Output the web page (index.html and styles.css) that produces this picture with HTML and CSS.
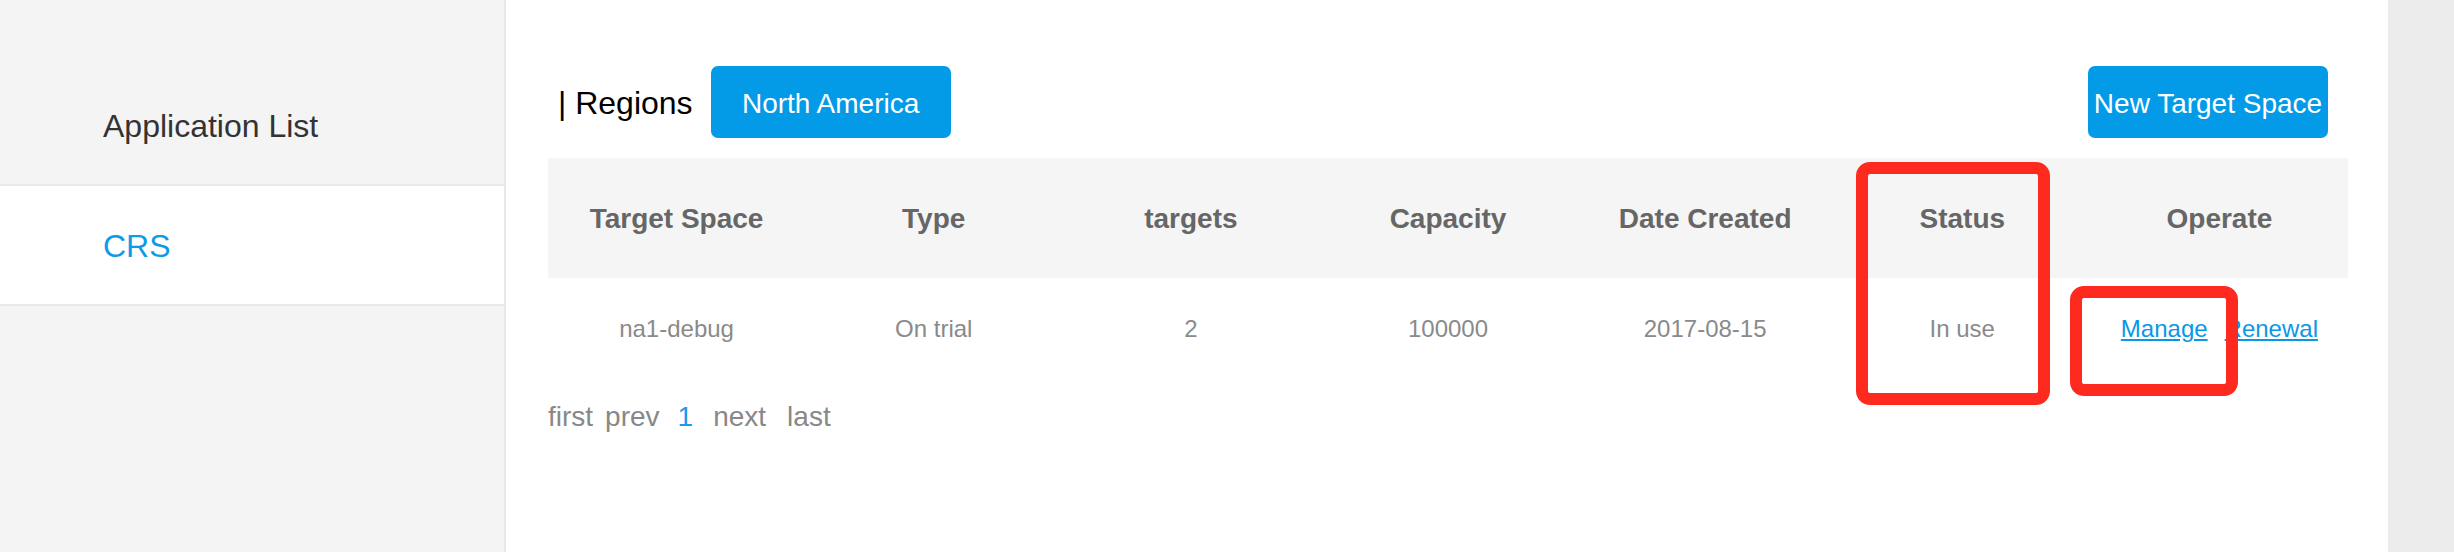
FILE: index.html
```html
<!DOCTYPE html>
<html lang="en">
<head>
<meta charset="utf-8">
<title>CRS</title>
<link rel="stylesheet" href="styles.css">
</head>
<body>
<div class="page">
  <aside class="sidebar">
    <div class="nav-item">Application List</div>
    <div class="nav-item active">CRS</div>
  </aside>
  <main class="main">
    <div class="toolbar">
      <span class="title">| Regions</span>
      <button class="btn region">North America</button>
      <button class="btn new">New Target Space</button>
    </div>
    <div class="table">
      <div class="row head">
        <div class="cell">Target Space</div>
        <div class="cell">Type</div>
        <div class="cell">targets</div>
        <div class="cell">Capacity</div>
        <div class="cell">Date Created</div>
        <div class="cell">Status</div>
        <div class="cell">Operate</div>
      </div>
      <div class="row data">
        <div class="cell">na1-debug</div>
        <div class="cell">On trial</div>
        <div class="cell">2</div>
        <div class="cell">100000</div>
        <div class="cell">2017-08-15</div>
        <div class="cell">In use</div>
        <div class="cell ops"><a href="#" class="link">Manage</a><a href="#" class="link renew">Renewal</a></div>
      </div>
    </div>
    <div class="pager">
      <span class="pg p-first">first</span>
      <span class="pg p-prev">prev</span>
      <span class="pg p-cur">1</span>
      <span class="pg p-next">next</span>
      <span class="pg">last</span>
    </div>
  </main>
  <div class="gutter"></div>
  <div class="mark mark-status"></div>
  <div class="mark mark-manage"></div>
</div>
</body>
</html>
```
FILE: styles.css
```css
* { box-sizing: border-box; }
html, body { margin: 0; padding: 0; }
body {
  font-family: "Liberation Sans", Arial, sans-serif;
  background: #ffffff;
}
.page {
  position: relative;
  display: flex;
  width: 2454px;
  height: 552px;
  overflow: hidden;
}
.sidebar {
  width: 506px;
  flex: none;
  background: #f4f4f4;
  border-right: 2px solid #e8e8e8;
  padding-top: 66px;
}
.nav-item {
  height: 120px;
  border-bottom: 2px solid #e9e9e9;
  display: flex;
  align-items: center;
  padding: 3px 0 0 103px;
  font-size: 32px;
  color: #333333;
}
.nav-item.active {
  background: #ffffff;
  color: #0d9be8;
}
.main {
  flex: 1;
  background: #ffffff;
  padding: 66px 40px 0 42px;
}
.gutter {
  width: 66px;
  flex: none;
  background: #ececec;
}
.toolbar {
  display: flex;
  align-items: center;
  height: 72px;
  padding: 0 20px 0 10px;
  margin-bottom: 20px;
}
.title {
  font-size: 32px;
  color: #000000;
  padding-top: 3px;
}
.btn {
  width: 240px;
  height: 72px;
  border: none;
  border-radius: 7px;
  background: #039be8;
  color: #ffffff;
  font-family: "Liberation Sans", Arial, sans-serif;
  font-size: 28px;
  padding: 3px 0 0 0;
  white-space: nowrap;
  display: flex;
  align-items: center;
  justify-content: center;
}
.btn.region { margin-left: 18px; }
.btn.new { margin-left: auto; }
.table { width: 1800px; }
.row {
  display: grid;
  grid-template-columns: repeat(7, 1fr);
  align-items: center;
  text-align: center;
}
.row.head {
  height: 120px;
  background: #f5f5f5;
  font-size: 28px;
  font-weight: bold;
  color: #666666;
  padding-top: 2px;
}
.row.data {
  height: 100px;
  font-size: 24px;
  color: #8a8a8a;
  padding-top: 2px;
}
.ops {
  display: flex;
  justify-content: center;
}
.link {
  color: #0a98e6;
  text-decoration: underline;
}
.link.renew { margin-left: 17px; }
.pager {
  display: flex;
  margin-top: 19px;
  line-height: 40px;
  font-size: 28px;
  color: #888888;
}
.p-first { margin-right: 12px; }
.p-prev { margin-right: 18px; }
.p-cur { margin-right: 20px; color: #1a9be8; }
.p-next { margin-right: 21px; }
.mark {
  position: absolute;
  border: 12px solid #fe2a1f;
  border-radius: 14px;
}
.mark-status {
  left: 1856px;
  top: 162px;
  width: 194px;
  height: 243px;
}
.mark-manage {
  left: 2070px;
  top: 286px;
  width: 168px;
  height: 110px;
}
```
